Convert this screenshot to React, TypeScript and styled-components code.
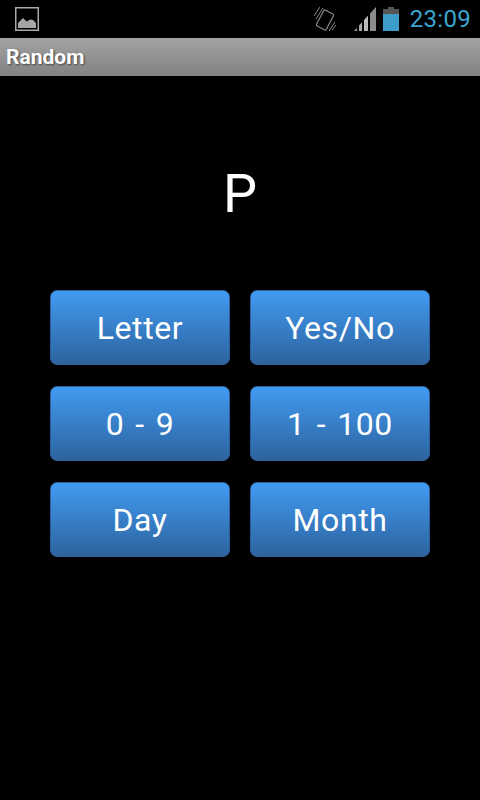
import React from 'react';
import styled, { createGlobalStyle } from 'styled-components';

const GlobalStyle = createGlobalStyle`
  html, body {
    margin: 0;
    padding: 0;
    background: #000;
    font-family: Roboto, "Open Sans", sans-serif;
  }
`;

const Screen = styled.div`
  width: 480px;
  height: 800px;
  background: #000;
  overflow: hidden;
`;

const StatusBar = styled.header`
  height: 38px;
  display: flex;
  align-items: center;
  padding: 0 9px 0 15px;
`;

const StatusRight = styled.div`
  margin-left: auto;
  display: flex;
  align-items: center;
`;

const VibrateSlot = styled.span`
  display: flex;
  margin-right: 17px;
`;

const BatterySlot = styled.span`
  display: flex;
  margin-left: 7px;
`;

const Clock = styled.span`
  font-size: 24px;
  line-height: 38px;
  color: #3aa6d0;
  margin-left: 11px;
  letter-spacing: 0.3px;
`;

const TitleBar = styled.div`
  height: 38px;
  display: flex;
  align-items: center;
  padding-left: 6px;
  background: linear-gradient(#a3a3a3, #828282);
`;

const Title = styled.h1`
  margin: 0;
  font-size: 21px;
  font-weight: 700;
  color: #fff;
  text-shadow: 1px 1px 2px #444;
`;

const Result = styled.div`
  height: 214px;
  padding-top: 20px;
  display: flex;
  align-items: center;
  justify-content: center;
  font-size: 54px;
  color: #fff;
  box-sizing: border-box;
`;

const ButtonGrid = styled.div`
  display: grid;
  grid-template-columns: 180px 180px;
  grid-auto-rows: 75px;
  column-gap: 20px;
  row-gap: 21px;
  justify-content: center;
`;

const ActionButton = styled.button`
  margin: 0;
  padding: 0;
  border: 1px solid #2c5f96;
  border-radius: 7px;
  background: linear-gradient(#429bf2, #2c639f);
  color: #fff;
  font-family: inherit;
  font-size: 32px;
  letter-spacing: 0.6px;
  word-spacing: 2.5px;
`;

const labels = ['Letter', 'Yes/No', '0 - 9', '1 - 100', 'Day', 'Month'];

const PictureIcon = () => (
  <svg width="24" height="24" viewBox="0 0 24 24">
    <rect x="0.75" y="0.75" width="22.5" height="22.5" fill="none" stroke="#aaa" strokeWidth="1.5" />
    <path d="M3 21 V16 L6 13 L8 11 L10 13 L12 14.5 L14 13 L16 12.5 L18 13 L20 15 L21 16 V21 Z" fill="#a5a5a5" />
  </svg>
);

const VibrateIcon = () => (
  <svg width="24" height="26" viewBox="0 0 24 26" fill="none" stroke="#8a8a8a" strokeWidth="1.2">
    <rect x="6.5" y="5" width="11" height="18" rx="1.5" transform="rotate(28 12 14)" />
    <path d="M1 10 L7 1 M3 13 L10 2 M16 25 L22 16 M19 24 L23 19" strokeWidth="1" />
  </svg>
);

const SignalIcon = () => (
  <svg width="22" height="24" viewBox="0 0 22 24">
    <path d="M0 24 L3 20.7 V24 Z" fill="#999" />
    <path d="M5 24 V18.5 L8 15.3 V24 Z" fill="#aaa" />
    <path d="M10 24 V13 L14 8.7 V24 Z" fill="#bbb" />
    <path d="M16 24 V6.5 L22 0 V24 Z" fill="#8c8c8c" />
  </svg>
);

const BatteryIcon = () => (
  <svg width="16" height="24" viewBox="0 0 16 24">
    <rect x="5" y="0" width="6" height="3" fill="#555" />
    <rect x="0" y="2" width="16" height="5" fill="#555" />
    <rect x="0" y="7" width="16" height="17" fill="#3c9dc8" />
  </svg>
);

const App = () => {
  return (
    <Screen>
      <GlobalStyle />
      <StatusBar>
        <PictureIcon />
        <StatusRight>
          <VibrateSlot>
            <VibrateIcon />
          </VibrateSlot>
          <SignalIcon />
          <BatterySlot>
            <BatteryIcon />
          </BatterySlot>
          <Clock>23:09</Clock>
        </StatusRight>
      </StatusBar>
      <TitleBar>
        <Title>Random</Title>
      </TitleBar>
      <Result>P</Result>
      <ButtonGrid>
        {labels.map((label) => (
          <ActionButton key={label}>{label}</ActionButton>
        ))}
      </ButtonGrid>
    </Screen>
  );
};

export default App;
